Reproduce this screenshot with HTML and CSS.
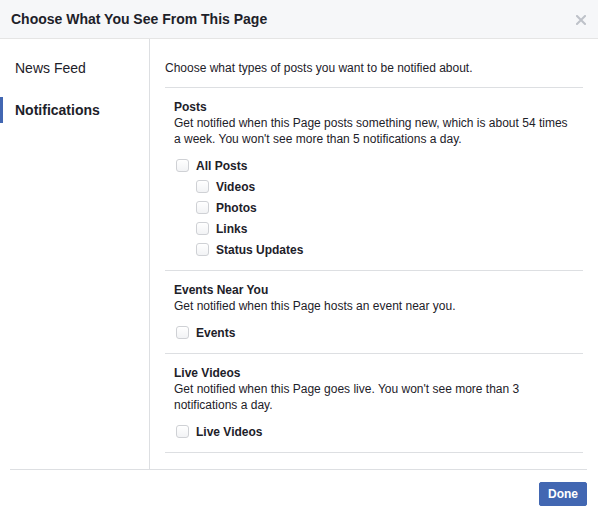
FILE: index.html
```html
<!DOCTYPE html>
<html lang="en">
<head>
<meta charset="utf-8">
<title>Choose What You See From This Page</title>
<link rel="stylesheet" href="styles.css">
</head>
<body>
<div class="dialog">
  <header class="dialog-header">
    <h2 class="dialog-title">Choose What You See From This Page</h2>
    <button class="dialog-close" type="button" aria-label="Close">
      <svg width="10" height="10" viewBox="0 0 10 10" aria-hidden="true">
        <path d="M1 1 L9 9 M9 1 L1 9" stroke="#bec2c9" stroke-width="2" stroke-linecap="square" fill="none"/>
      </svg>
    </button>
  </header>

  <div class="dialog-body">
    <nav class="side-nav">
      <a class="nav-item" href="#">News Feed</a>
      <a class="nav-item is-active" href="#">Notifications</a>
    </nav>

    <div class="pane">
      <p class="intro">Choose what types of posts you want to be notified about.</p>

      <section class="group">
        <h3 class="group-title">Posts</h3>
        <p class="group-desc">Get notified when this Page posts something new, which is about 54 times a week. You won't see more than 5 notifications a day.</p>
        <ul class="checks">
          <li class="check"><span class="box"></span>All Posts</li>
          <li class="check sub"><span class="box"></span>Videos</li>
          <li class="check sub"><span class="box"></span>Photos</li>
          <li class="check sub"><span class="box"></span>Links</li>
          <li class="check sub"><span class="box"></span>Status Updates</li>
        </ul>
      </section>

      <section class="group">
        <h3 class="group-title">Events Near You</h3>
        <p class="group-desc">Get notified when this Page hosts an event near you.</p>
        <ul class="checks">
          <li class="check"><span class="box"></span>Events</li>
        </ul>
      </section>

      <section class="group">
        <h3 class="group-title">Live Videos</h3>
        <p class="group-desc">Get notified when this Page goes live. You won't see more than 3 notifications a day.</p>
        <ul class="checks">
          <li class="check"><span class="box"></span>Live Videos</li>
        </ul>
      </section>
    </div>
  </div>

  <footer class="dialog-footer">
    <button class="btn-done" type="button">Done</button>
  </footer>
</div>
</body>
</html>
```

FILE: styles.css
```css
html, body {
  margin: 0;
  padding: 0;
  background: #fff;
}

body {
  font-family: "Liberation Sans", Arial, Helvetica, sans-serif;
  color: #1d2129;
  font-size: 12px;
}

.dialog {
  width: 598px;
  background: #fff;
}

/* Header bar */
.dialog-header {
  height: 38px;
  background: #f6f7f9;
  border-bottom: 1px solid #e5e5e5;
  display: flex;
  align-items: center;
  justify-content: space-between;
  padding: 0 12px 0 11px;
}

.dialog-title {
  margin: 0;
  font-size: 14px;
  font-weight: bold;
  line-height: 18px;
  color: #1d2129;
}

.dialog-close {
  border: 0;
  background: none;
  padding: 0;
  width: 10px;
  height: 10px;
  display: block;
  margin-top: 2px;
}

.dialog-close svg {
  display: block;
}

/* Body: side navigation + settings pane */
.dialog-body {
  display: flex;
}

.side-nav {
  width: 150px;
  flex: none;
  box-sizing: border-box;
  border-right: 1px solid #dddfe2;
  padding: 16px 0;
  display: flex;
  flex-direction: column;
  gap: 16px;
}

.nav-item {
  display: block;
  position: relative;
  padding: 0 15px;
  line-height: 26px;
  height: 26px;
  font-size: 14px;
  color: #1d2129;
  text-decoration: none;
}

.nav-item.is-active {
  font-weight: bold;
}

.nav-item.is-active::before {
  content: "";
  position: absolute;
  left: 0;
  top: 0;
  bottom: 0;
  width: 3px;
  background: #4267b2;
}

.pane {
  flex: 1;
  padding: 0 15px 16px 15px;
}

.intro {
  margin: 0;
  padding: 21px 0 11px;
  line-height: 16px;
  border-bottom: 1px solid #dddfe2;
}

.group {
  padding: 11px 10px 10px 9px;
  border-bottom: 1px solid #dddfe2;
}

.group-title {
  margin: 0;
  font-size: 12px;
  font-weight: bold;
  line-height: 16px;
}

.group-desc {
  margin: 0;
  line-height: 16px;
}

.checks {
  list-style: none;
  margin: 8px 0 0;
  padding: 0;
}

.check {
  height: 21px;
  display: flex;
  align-items: center;
  font-weight: bold;
  font-size: 12px;
}

.check.sub {
  padding-left: 20px;
}

.box {
  width: 13px;
  height: 13px;
  box-sizing: border-box;
  margin: 0 7px 0 2px;
  border: 1px solid #cfd1d5;
  border-radius: 3px;
  background: linear-gradient(#ffffff, #f2f3f5);
  box-shadow: inset 0 1px 0 #fff;
  flex: none;
}

/* Footer */
.dialog-footer {
  margin: 0 11px 0 10px;
  border-top: 1px solid #dddfe2;
  padding: 12px 0 10px;
  display: flex;
  justify-content: flex-end;
}

.btn-done {
  height: 24px;
  padding: 0 8px;
  border: 1px solid #4267b2;
  border-radius: 2px;
  background: #4267b2;
  color: #fff;
  font-family: "Liberation Sans", Arial, Helvetica, sans-serif;
  font-size: 12px;
  font-weight: bold;
  line-height: 22px;
}
```
